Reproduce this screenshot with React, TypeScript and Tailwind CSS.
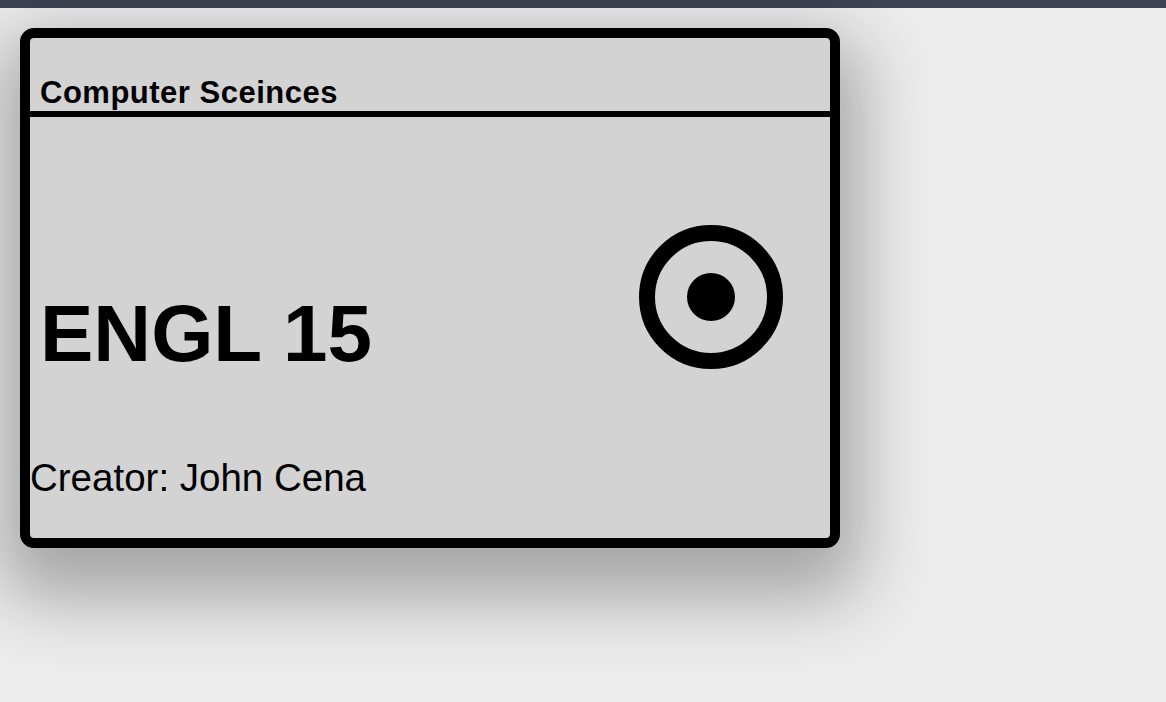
import React from 'react';

const font = { fontFamily: '"Liberation Sans", Arial, Helvetica, sans-serif' };

const TargetIcon = () => (
  <svg width="144" height="144" viewBox="0 0 144 144" className="shrink-0">
    <circle cx="72" cy="72" r="64" fill="none" stroke="black" strokeWidth="16" />
    <circle cx="72" cy="72" r="24" fill="black" />
  </svg>
);

const CourseCard = () => {
  return (
    <div className="w-[820px] h-[520px] rounded-[14px] border-[10px] border-black bg-[#d3d3d3] flex flex-col shadow-[0_30px_70px_20px_rgba(0,0,0,0.3)]">
      <div className="h-[79px] shrink-0 flex items-end border-b-[6px] border-black pl-[10px] pb-[3px]">
        <h3 className="text-[31px] leading-none font-bold tracking-[0.5px] text-black">Computer Sceinces</h3>
      </div>
      <div className="flex flex-col flex-1">
        <div className="flex items-start justify-between">
          <h1 className="mt-[177px] pl-[10px] text-[80px] leading-none font-bold text-black">ENGL 15</h1>
          <div className="mt-[108px] mr-[47px]">
            <TargetIcon />
          </div>
        </div>
        <p className="mt-[85px] text-[38.5px] leading-none text-black">Creator: John Cena</p>
      </div>
    </div>
  );
};

export default function App() {
  return (
    <div className="min-h-screen w-full bg-[#ececec] overflow-hidden" style={font}>
      <div className="h-2 bg-[#3f4254]" />
      <div className="pl-5 pt-5">
        <CourseCard />
      </div>
    </div>
  );
}
